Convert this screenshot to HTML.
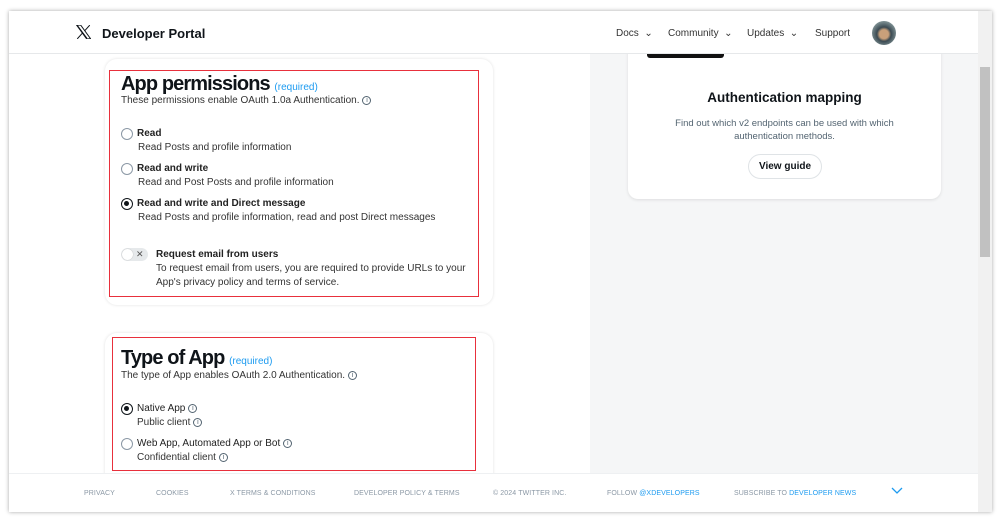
<!DOCTYPE html>
<html><head><style>
*{box-sizing:border-box;margin:0;padding:0}
body{width:1000px;height:520px;background:#fff;font-family:"Liberation Sans",Arial,sans-serif;position:relative;overflow:hidden;color:#0f1419}
.win{position:absolute;left:9px;top:11px;width:983px;height:501px;background:#fff;box-shadow:0 0 4px rgba(0,0,0,.35);overflow:hidden}
.gray{position:absolute;left:581px;top:43px;width:388px;height:420px;background:#f5f6f7}
.hdr{position:absolute;left:0;top:0;width:969px;height:43px;background:#fff;border-bottom:1px solid #e6e8ea;z-index:2}
.sb{position:absolute;left:969px;top:0;width:14px;height:501px;background:#f1f1f1}
.thumb{position:absolute;left:971px;top:56px;width:10px;height:190px;background:#c1c1c1}
.abs{position:absolute}
.card{position:absolute;background:#fff;border-radius:12px;box-shadow:0 0 3px rgba(0,0,0,.12)}
.red{position:absolute;border:1.5px solid #e8303c}
.t{position:absolute;white-space:nowrap}
.radio{position:absolute;width:12px;height:12px;border:1px solid #8b98a5;border-radius:50%}
.radio.on{border:1.5px solid #0f1419}
.radio.on:after{content:"";position:absolute;left:2px;top:2px;width:5px;height:5px;border-radius:50%;background:#0f1419}
.info{display:inline-block;width:9px;height:9px;border:1px solid #536471;border-radius:50%;font-size:7px;line-height:8px;text-align:center;color:#536471;vertical-align:1px;margin-left:3px}
.ft{position:absolute;top:479px;font-size:7px;color:#8b98a5;letter-spacing:.1px;white-space:nowrap}
.ft b{color:#1d9bf0;font-weight:normal}
.h{font-size:20px;font-weight:bold;letter-spacing:-0.9px}
.h span{font-size:10px;font-weight:normal;color:#1d9bf0;letter-spacing:0}
</style></head><body>
<div class="win">
<div class="gray"></div>
<div class="hdr">
 <svg class="abs" style="left:67px;top:14px" width="15" height="14" viewBox="0 0 24 22"><path d="M1 0h6.5l16 22h-6.5zM2.5 1l15 20M22 0L13.5 9.5M2 22l8.5-9.5" stroke="#0f1419" stroke-width="1.6" fill="none"/></svg>
 <div class="t" style="left:93px;top:15px;font-size:13px;font-weight:bold">Developer Portal</div>
 <div class="t" style="left:607px;top:17px;font-size:10px;color:#333">Docs &nbsp;⌄</div>
 <div class="t" style="left:659px;top:17px;font-size:10px;color:#333">Community &nbsp;⌄</div>
 <div class="t" style="left:738px;top:17px;font-size:10px;color:#333">Updates &nbsp;⌄</div>
 <div class="t" style="left:806px;top:17px;font-size:10px;color:#333">Support</div>
 <div class="abs" style="left:863px;top:10px;width:24px;height:24px;border-radius:50%;background:radial-gradient(circle at 50% 55%,#c9a07a 0 25%,#3b4a52 40%,#7a8c8f 70%)"></div>
</div>
<div class="card" style="left:619px;top:30px;width:313px;height:158px;border-radius:0 0 10px 10px;box-shadow:0 1px 3px rgba(0,0,0,.1)"></div>
<div class="abs" style="left:638px;top:43px;width:77px;height:4px;background:#111;border-radius:0 0 3px 3px;z-index:3"></div>
<div class="t" style="left:619px;width:313px;text-align:center;top:79px;font-size:13.5px;font-weight:bold">Authentication mapping</div>
<div class="t" style="left:619px;width:313px;text-align:center;top:106px;font-size:9.5px;color:#536471;line-height:13px;white-space:normal">Find out which v2 endpoints can be used with which<br>authentication methods.</div>
<div class="abs" style="left:739px;top:143px;width:74px;height:25px;border:1px solid #dfe3e6;border-radius:13px;font-size:10px;font-weight:bold;text-align:center;line-height:23px">View guide</div>

<div class="card" style="left:96px;top:48px;width:388px;height:246px"></div>
<div class="red" style="left:100px;top:59px;width:370px;height:227px"></div>
<div class="t h" style="left:112px;top:62px">App permissions <span>(required)</span></div>
<div class="t" style="left:112px;top:84px;font-size:10px;color:#333">These permissions enable OAuth 1.0a Authentication.<span class="info">i</span></div>
<div class="radio" style="left:112px;top:117px"></div>
<div class="t" style="left:128px;top:117px;font-size:10px;font-weight:bold;color:#222">Read</div>
<div class="t" style="left:129px;top:131px;font-size:10px;color:#333">Read Posts and profile information</div>
<div class="radio" style="left:112px;top:152px"></div>
<div class="t" style="left:128px;top:152px;font-size:10px;font-weight:bold;color:#222">Read and write</div>
<div class="t" style="left:129px;top:166px;font-size:10px;color:#333">Read and Post Posts and profile information</div>
<div class="radio on" style="left:112px;top:187px"></div>
<div class="t" style="left:128px;top:187px;font-size:10px;font-weight:bold;color:#222">Read and write and Direct message</div>
<div class="t" style="left:129px;top:201px;font-size:10px;color:#333">Read Posts and profile information, read and post Direct messages</div>
<div class="abs" style="left:112px;top:237px;width:27px;height:13px;border-radius:7px;background:#e6e9eb"></div>
<div class="abs" style="left:113px;top:238px;width:11px;height:11px;border-radius:50%;background:#fff;box-shadow:0 0 1px rgba(0,0,0,.3)"></div>
<div class="t" style="left:127px;top:238px;font-size:9px;color:#555">✕</div>
<div class="t" style="left:147px;top:238px;font-size:10px;font-weight:bold;color:#222">Request email from users</div>
<div class="t" style="left:147px;top:251px;font-size:10px;color:#333;line-height:14px">To request email from users, you are required to provide URLs to your<br>App's privacy policy and terms of service.</div>

<div class="card" style="left:96px;top:322px;width:388px;height:160px"></div>
<div class="red" style="left:103px;top:326px;width:364px;height:134px"></div>
<div class="t h" style="left:112px;top:336px">Type of App <span>(required)</span></div>
<div class="t" style="left:112px;top:359px;font-size:10px;color:#333">The type of App enables OAuth 2.0 Authentication.<span class="info">i</span></div>
<div class="radio on" style="left:112px;top:392px"></div>
<div class="t" style="left:128px;top:392px;font-size:10px;color:#222">Native App<span class="info">i</span></div>
<div class="t" style="left:128px;top:406px;font-size:10px;color:#333">Public client<span class="info">i</span></div>
<div class="radio" style="left:112px;top:427px"></div>
<div class="t" style="left:128px;top:427px;font-size:10px;color:#222">Web App, Automated App or Bot<span class="info">i</span></div>
<div class="t" style="left:128px;top:441px;font-size:10px;color:#333">Confidential client<span class="info">i</span></div>

<div class="abs" style="left:0;top:462px;width:969px;height:39px;background:#fff;border-top:1px solid #eef0f2"></div>
<div class="ft" style="left:75px">PRIVACY</div>
<div class="ft" style="left:147px">COOKIES</div>
<div class="ft" style="left:221px">X TERMS &amp; CONDITIONS</div>
<div class="ft" style="left:345px">DEVELOPER POLICY &amp; TERMS</div>
<div class="ft" style="left:484px">© 2024 TWITTER INC.</div>
<div class="ft" style="left:598px">FOLLOW <b>@XDEVELOPERS</b></div>
<div class="ft" style="left:725px">SUBSCRIBE TO <b>DEVELOPER NEWS</b></div>
<svg class="abs" style="left:882px;top:476px" width="12" height="8" viewBox="0 0 12 8"><path d="M1 1l5 5 5-5" stroke="#1d9bf0" stroke-width="1.3" fill="none"/></svg>
<div class="sb"></div><div class="thumb"></div>
</div>
</body></html>
